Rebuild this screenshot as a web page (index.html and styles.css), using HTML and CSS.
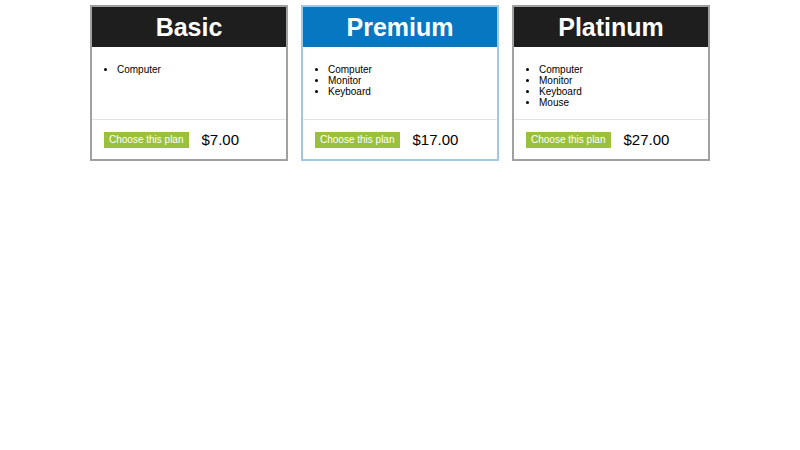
FILE: index.html
```html
<!DOCTYPE html>
<html lang="en">
<head>
  <meta charset="UTF-8" />
  <title>Plans</title>
  <link rel="stylesheet" href="styles.css">
</head>
<body>
  <div class="plans">
    <div class="plan">
      <h2 class="plan-title">Basic</h2>
      <ul class="features">
        <li>Computer</li>
      </ul>
      <div class="plan-footer">
        <button type="button" class="choose-btn">Choose this plan</button>
        <span class="price">$7.00</span>
      </div>
    </div>

    <div class="plan featured">
      <h2 class="plan-title">Premium</h2>
      <ul class="features">
        <li>Computer</li>
        <li>Monitor</li>
        <li>Keyboard</li>
      </ul>
      <div class="plan-footer">
        <button type="button" class="choose-btn">Choose this plan</button>
        <span class="price">$17.00</span>
      </div>
    </div>

    <div class="plan">
      <h2 class="plan-title">Platinum</h2>
      <ul class="features">
        <li>Computer</li>
        <li>Monitor</li>
        <li>Keyboard</li>
        <li>Mouse</li>
      </ul>
      <div class="plan-footer">
        <button type="button" class="choose-btn">Choose this plan</button>
        <span class="price">$27.00</span>
      </div>
    </div>
  </div>
</body>
</html>
```

FILE: styles.css
```css
body {
  font-family: "Liberation Sans", Arial, sans-serif;
  background-color: #fff;
  margin: 0;
  padding: 5px 0 0;
}
.plans {
  display: flex;
  justify-content: center;
  gap: 13px;
}
.plan {
  width: 198px;
  box-sizing: border-box;
  border: 2px solid #a0a0a0;
  background: #fff;
}
.plan.featured {
  border-color: #9fc9e3;
}
.plan-title {
  margin: 0;
  height: 40px;
  line-height: 40px;
  text-align: center;
  font-size: 25px;
  font-weight: bold;
  color: #fff;
  background-color: #1e1e1e;
}
.featured .plan-title {
  background-color: #0677c0;
}
.features {
  margin: 0;
  height: 73px;
  box-sizing: border-box;
  padding: 17px 0 0 25px;
  font-size: 10px;
  line-height: 11px;
  color: #000;
  border-bottom: 1px solid #e4e4e4;
}
.plan-footer {
  height: 39px;
  display: flex;
  align-items: center;
  padding-left: 12px;
  gap: 13px;
}
.choose-btn {
  font-family: inherit;
  font-size: 10px;
  line-height: 12px;
  padding: 2px 5px;
  border: none;
  border-radius: 0;
  background-color: #9bc13c;
  color: #fff;
  cursor: pointer;
}
.price {
  font-size: 15px;
  color: #000;
}
```
